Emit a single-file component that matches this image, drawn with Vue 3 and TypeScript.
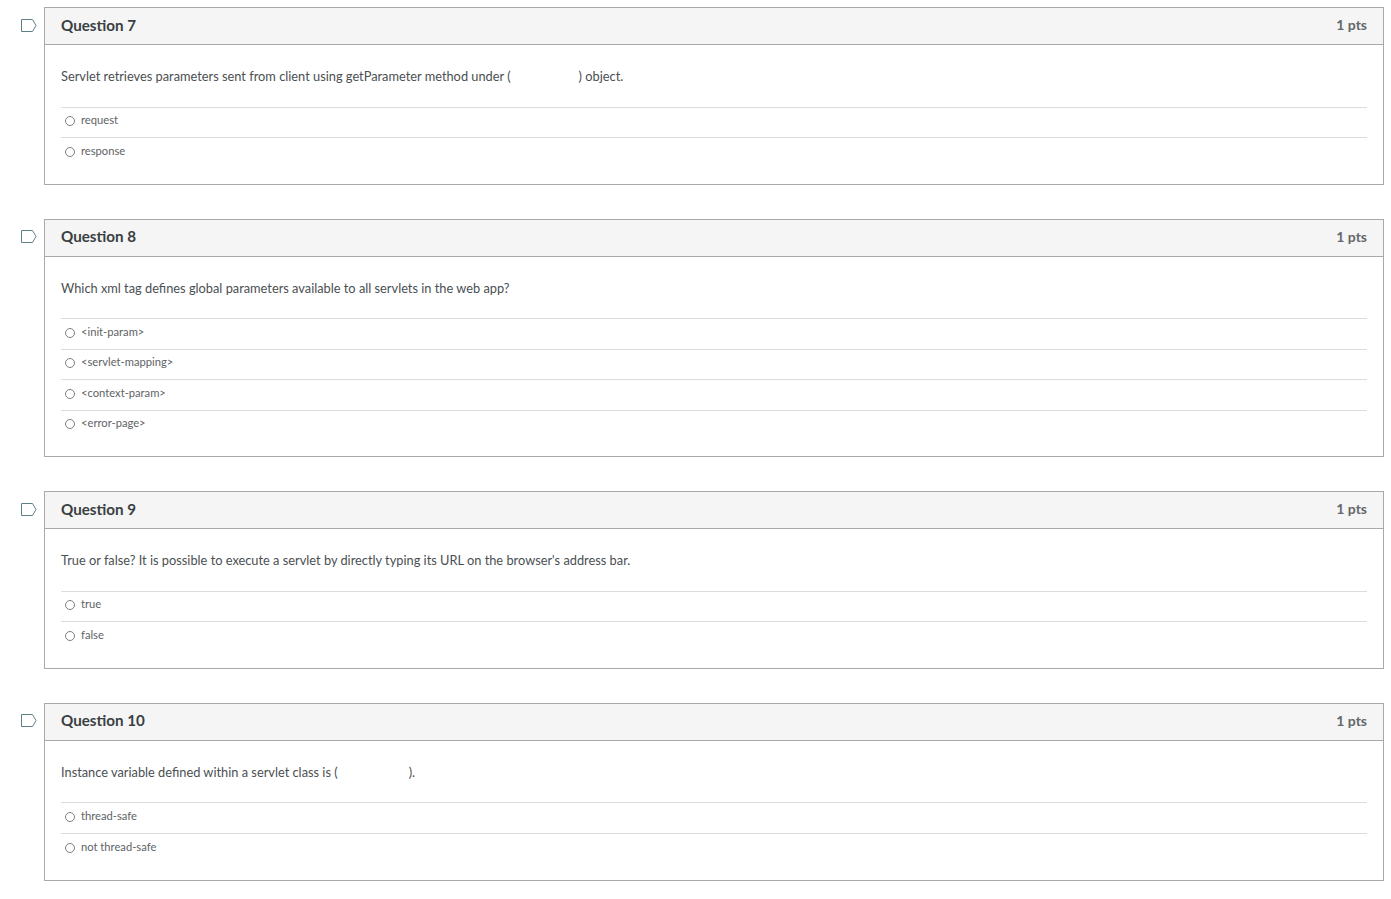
<script setup lang="ts">
interface Question {
  title: string
  text: string
  gapAfter?: string
  gapWidth?: number
  answers: string[]
}
const questions: Question[] = [
  { title: 'Question 7', text: 'Servlet retrieves parameters sent from client using getParameter method under (', gapAfter: ') object.', gapWidth: 68, answers: ['request', 'response'] },
  { title: 'Question 8', text: 'Which xml tag defines global parameters available to all servlets in the web app?', answers: ['<init-param>', '<servlet-mapping>', '<context-param>', '<error-page>'] },
  { title: 'Question 9', text: "True or false? It is possible to execute a servlet by directly typing its URL on the browser's address bar.", answers: ['true', 'false'] },
  { title: 'Question 10', text: 'Instance variable defined within a servlet class is (', gapAfter: ').', gapWidth: 71, answers: ['thread-safe', 'not thread-safe'] },
]
</script>

<template>
  <main class="page">
    <section v-for="q in questions" :key="q.title" class="item">
      <svg class="flag" width="16" height="13" viewBox="0 0 16 13" aria-hidden="true">
        <path d="M0.5 0.5H11.5L15 6.5L11.5 12.5H0.5Z" fill="#fff" stroke="#5f7f86" stroke-width="1" />
      </svg>
      <article class="card">
        <header class="head">
          <h2 class="title">{{ q.title }}</h2>
          <span class="pts">1 pts</span>
        </header>
        <div class="body">
          <p class="text">{{ q.text }}<span v-if="q.gapAfter" class="gap" :style="{ width: q.gapWidth + 'px' }"></span>{{ q.gapAfter }}</p>
          <ul class="answers">
            <li v-for="a in q.answers" :key="a" class="answer">
              <span class="radio"></span>
              <span class="label">{{ a }}</span>
            </li>
          </ul>
        </div>
      </article>
    </section>
  </main>
</template>

<style>
html, body { margin: 0; background: #fff; }
</style>

<style scoped>
.page {
  padding: 7px 7px 19px 21px;
  display: flex;
  flex-direction: column;
  gap: 33.85px;
  font-family: Lato, "Open Sans", sans-serif;
  color: #44494c;
}
.item { display: flex; align-items: flex-start; }
.flag { width: 16px; flex: none; margin: 11.6px 7px 0 0; }
.card { flex: 1; border: 1px solid #a9a9a9; min-width: 0; }
.head {
  box-sizing: border-box;
  height: 37px;
  display: flex;
  align-items: center;
  justify-content: space-between;
  padding: 0 16px 3px;
  background: #f5f5f5;
  border-bottom: 1px solid #a9a9a9;
}
.title { margin: 0; font-size: 15.2px; font-weight: 700; color: #3a3f42; }
.pts { font-size: 14px; font-weight: 700; color: #62676a; }
.body { padding: 22px 16px 16.2px; }
.text { margin: 0 0 20.6px; font-size: 12.8px; line-height: 19px; color: #4a4f52; }
.gap { display: inline-block; }
.answers { list-style: none; margin: 0; padding: 0; }
.answer {
  box-sizing: border-box;
  height: 30.5px;
  display: flex;
  align-items: center;
  gap: 6px;
  padding: 0 0 5.4px 4px;
  border-top: 1px solid #dcdcdc;
}
.radio {
  width: 8px;
  height: 8px;
  border: 1px solid #808080;
  border-radius: 50%;
  background: #fff;
  flex: none;
  margin-top: 3px;
}
.label { font-size: 11.2px; color: #5e6366; }
</style>
